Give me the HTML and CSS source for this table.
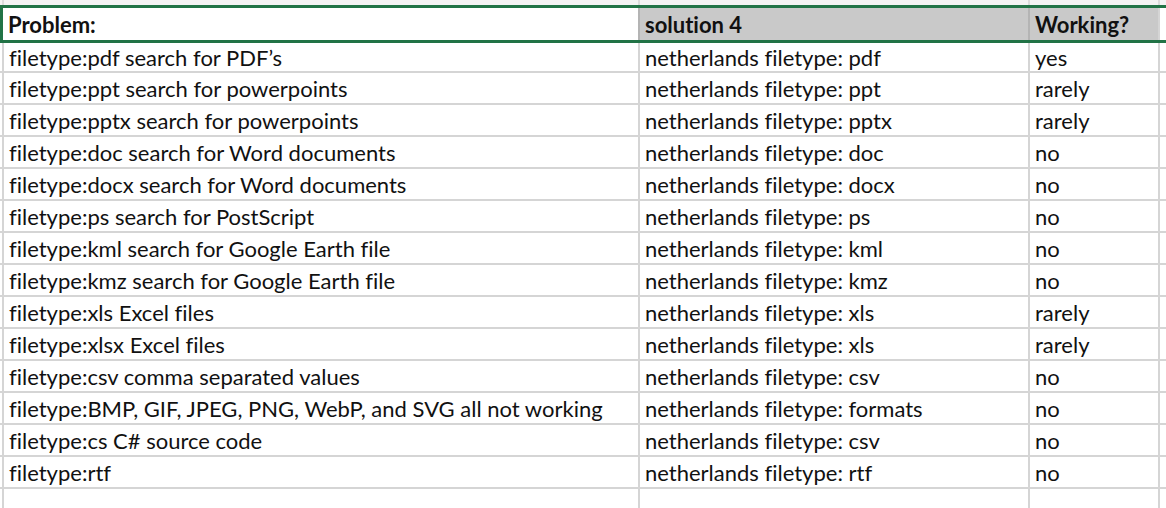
FILE: index.html
```html
<!DOCTYPE html>
<html>
<head>
<meta charset="utf-8">
<link rel="stylesheet" href="styles.css">
</head>
<body>
<div class="sheet">
  <div class="row top">
    <div class="c c1"></div><div class="c c2"></div><div class="c c3"></div><div class="c c4"></div>
  </div>
  <div class="row head">
    <div class="c c1">Problem:</div><div class="c c2 shade">solution 4</div><div class="c c3 shade">Working?</div><div class="c c4"></div>
  </div>
  <div class="row data first">
    <div class="c c1">filetype:pdf search for PDF’s</div><div class="c c2">netherlands filetype: pdf</div><div class="c c3">yes</div><div class="c c4"></div>
  </div>
  <div class="row data">
    <div class="c c1">filetype:ppt search for powerpoints</div><div class="c c2">netherlands filetype: ppt</div><div class="c c3">rarely</div><div class="c c4"></div>
  </div>
  <div class="row data">
    <div class="c c1">filetype:pptx search for powerpoints</div><div class="c c2">netherlands filetype: pptx</div><div class="c c3">rarely</div><div class="c c4"></div>
  </div>
  <div class="row data">
    <div class="c c1">filetype:doc search for Word documents</div><div class="c c2">netherlands filetype: doc</div><div class="c c3">no</div><div class="c c4"></div>
  </div>
  <div class="row data">
    <div class="c c1">filetype:docx search for Word documents</div><div class="c c2">netherlands filetype: docx</div><div class="c c3">no</div><div class="c c4"></div>
  </div>
  <div class="row data">
    <div class="c c1">filetype:ps search for PostScript</div><div class="c c2">netherlands filetype: ps</div><div class="c c3">no</div><div class="c c4"></div>
  </div>
  <div class="row data">
    <div class="c c1">filetype:kml search for Google Earth file</div><div class="c c2">netherlands filetype: kml</div><div class="c c3">no</div><div class="c c4"></div>
  </div>
  <div class="row data">
    <div class="c c1">filetype:kmz search for Google Earth file</div><div class="c c2">netherlands filetype: kmz</div><div class="c c3">no</div><div class="c c4"></div>
  </div>
  <div class="row data">
    <div class="c c1">filetype:xls Excel files</div><div class="c c2">netherlands filetype: xls</div><div class="c c3">rarely</div><div class="c c4"></div>
  </div>
  <div class="row data">
    <div class="c c1">filetype:xlsx Excel files</div><div class="c c2">netherlands filetype: xls</div><div class="c c3">rarely</div><div class="c c4"></div>
  </div>
  <div class="row data">
    <div class="c c1">filetype:csv comma separated values</div><div class="c c2">netherlands filetype: csv</div><div class="c c3">no</div><div class="c c4"></div>
  </div>
  <div class="row data">
    <div class="c c1">filetype:BMP, GIF, JPEG, PNG, WebP, and SVG all not working</div><div class="c c2">netherlands filetype: formats</div><div class="c c3">no</div><div class="c c4"></div>
  </div>
  <div class="row data">
    <div class="c c1">filetype:cs C# source code</div><div class="c c2">netherlands filetype: csv</div><div class="c c3">no</div><div class="c c4"></div>
  </div>
  <div class="row data">
    <div class="c c1">filetype:rtf</div><div class="c c2">netherlands filetype: rtf</div><div class="c c3">no</div><div class="c c4"></div>
  </div>
  <div class="row data">
    <div class="c c1"></div><div class="c c2"></div><div class="c c3"></div><div class="c c4"></div>
  </div>
</div>
</body>
</html>
```

FILE: styles.css
```css
html, body {
  margin: 0;
  padding: 0;
  background: #ffffff;
}

body {
  width: 1166px;
  height: 508px;
  overflow: hidden;
  font-family: Lato, "Open Sans", sans-serif;
  font-size: 22px;
  font-variant-ligatures: none;
  color: #111111;
}

.sheet {
  display: flex;
  flex-direction: column;
}

.row {
  display: grid;
  grid-template-columns: 636px 390px 130px 1fr;
  padding-left: 2px;
  box-sizing: border-box;
}

.c {
  border-left: 2px solid #d5d5d5;
  padding-left: 5px;
  white-space: nowrap;
  overflow: hidden;
}

.top {
  height: 5px;
  background: #f3f3f3;
}

.top .c {
  border-left-color: #dcdcdc;
}

.head {
  height: 38px;
  border-top: 3px solid #217346;
  border-bottom: 3px solid #217346;
  padding-left: 0;
  font-weight: 700;
  grid-template-columns: 638px 390px 130px 1fr;
}

.head .c {
  line-height: 32px;
  padding-top: 1px;
}

.head .c1 {
  border-left: 3px solid #217346;
  padding-left: 5px;
}

.head .c4 {
  background: #ffffff;
}

.shade {
  background: #c9c9c9;
}

.head .c2,
.head .c3 {
  border-left-color: #b4b4b4;
}

.data {
  height: 32px;
  border-bottom: 2px solid #d5d5d5;
}

.data .c {
  line-height: 30px;
  padding-top: 1px;
}

.data.first {
  height: 30px;
}

.data.first .c {
  line-height: 28px;
}
```
